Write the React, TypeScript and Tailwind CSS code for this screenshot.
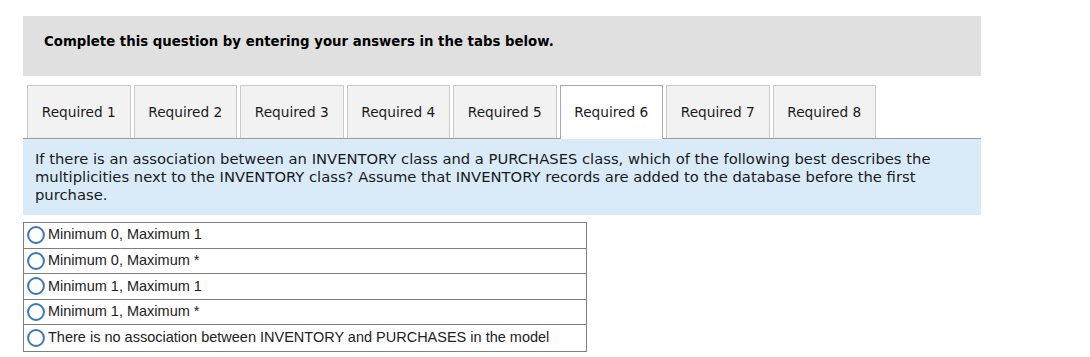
const tabs = ["Required 1", "Required 2", "Required 3", "Required 4", "Required 5", "Required 6", "Required 7", "Required 8"];

const options = [
  "Minimum 0, Maximum 1",
  "Minimum 0, Maximum *",
  "Minimum 1, Maximum 1",
  "Minimum 1, Maximum *",
  "There is no association between INVENTORY and PURCHASES in the model",
];

function Radio() {
  return (
    <svg width="18" height="18" viewBox="0 0 18 18" className="shrink-0">
      <circle cx="9" cy="9" r="7.9" fill="white" stroke="#3c76bc" strokeWidth="2" />
    </svg>
  );
}

export default function App() {
  return (
    <div className="bg-white min-h-[357px] pt-4 pl-[23px]">
      <div className="w-[958px]">
        <div className="h-[60px] bg-[#e0e0e0] pl-[21px] pt-[18px]">
          <p className="font-bold text-[13.3px] leading-[16px] text-black" style={{ fontFamily: "'DejaVu Sans', Verdana, sans-serif" }}>
            Complete this question by entering your answers in the tabs below.
          </p>
        </div>

        <div
          className="mt-[9px] flex gap-[3px] pl-[4px] border-b border-[#9a9a9a]"
          style={{ fontFamily: "'DejaVu Sans', Verdana, sans-serif" }}
        >
          {tabs.map((t, i) =>
            i === 5 ? (
              <div
                key={t}
                className="w-[103.5px] h-[54px] pb-px -mb-px border border-b-0 border-[#a8a8a8] bg-white flex items-center justify-center text-[13.7px] text-[#1a1a1a]"
              >
                {t}
              </div>
            ) : (
              <div
                key={t}
                className="w-[103.5px] h-[53px] border border-b-0 border-[#c9c9c9] bg-[#f2f2f2] flex items-center justify-center text-[13.7px] text-[#1a1a1a]"
              >
                {t}
              </div>
            )
          )}
        </div>

        <div
          className="bg-[#d9ebf8] pl-3 pr-3 pt-[11px] pb-[11px] text-[14.75px] leading-[18px] text-[#1a1a1a]"
          style={{ fontFamily: "'DejaVu Sans', Verdana, sans-serif" }}
        >
          If there is an association between an INVENTORY class and a PURCHASES class, which of the following best describes the
          multiplicities next to the INVENTORY class? Assume that INVENTORY records are added to the database before the first
          purchase.
        </div>

        <div
          className="mt-[7px] w-[564px] border border-[#7f7f7f] text-[14.5px] text-[#222]"
          style={{ fontFamily: "'Liberation Sans', Arial, sans-serif" }}
        >
          {options.map((o, i) => (
            <div
              key={o}
              className={`h-[25.6px] flex items-center pl-[3px] ${i < options.length - 1 ? "border-b border-[#7f7f7f]" : ""}`}
            >
              <Radio />
              <span className="ml-[3px]">{o}</span>
            </div>
          ))}
        </div>
      </div>
    </div>
  );
}
